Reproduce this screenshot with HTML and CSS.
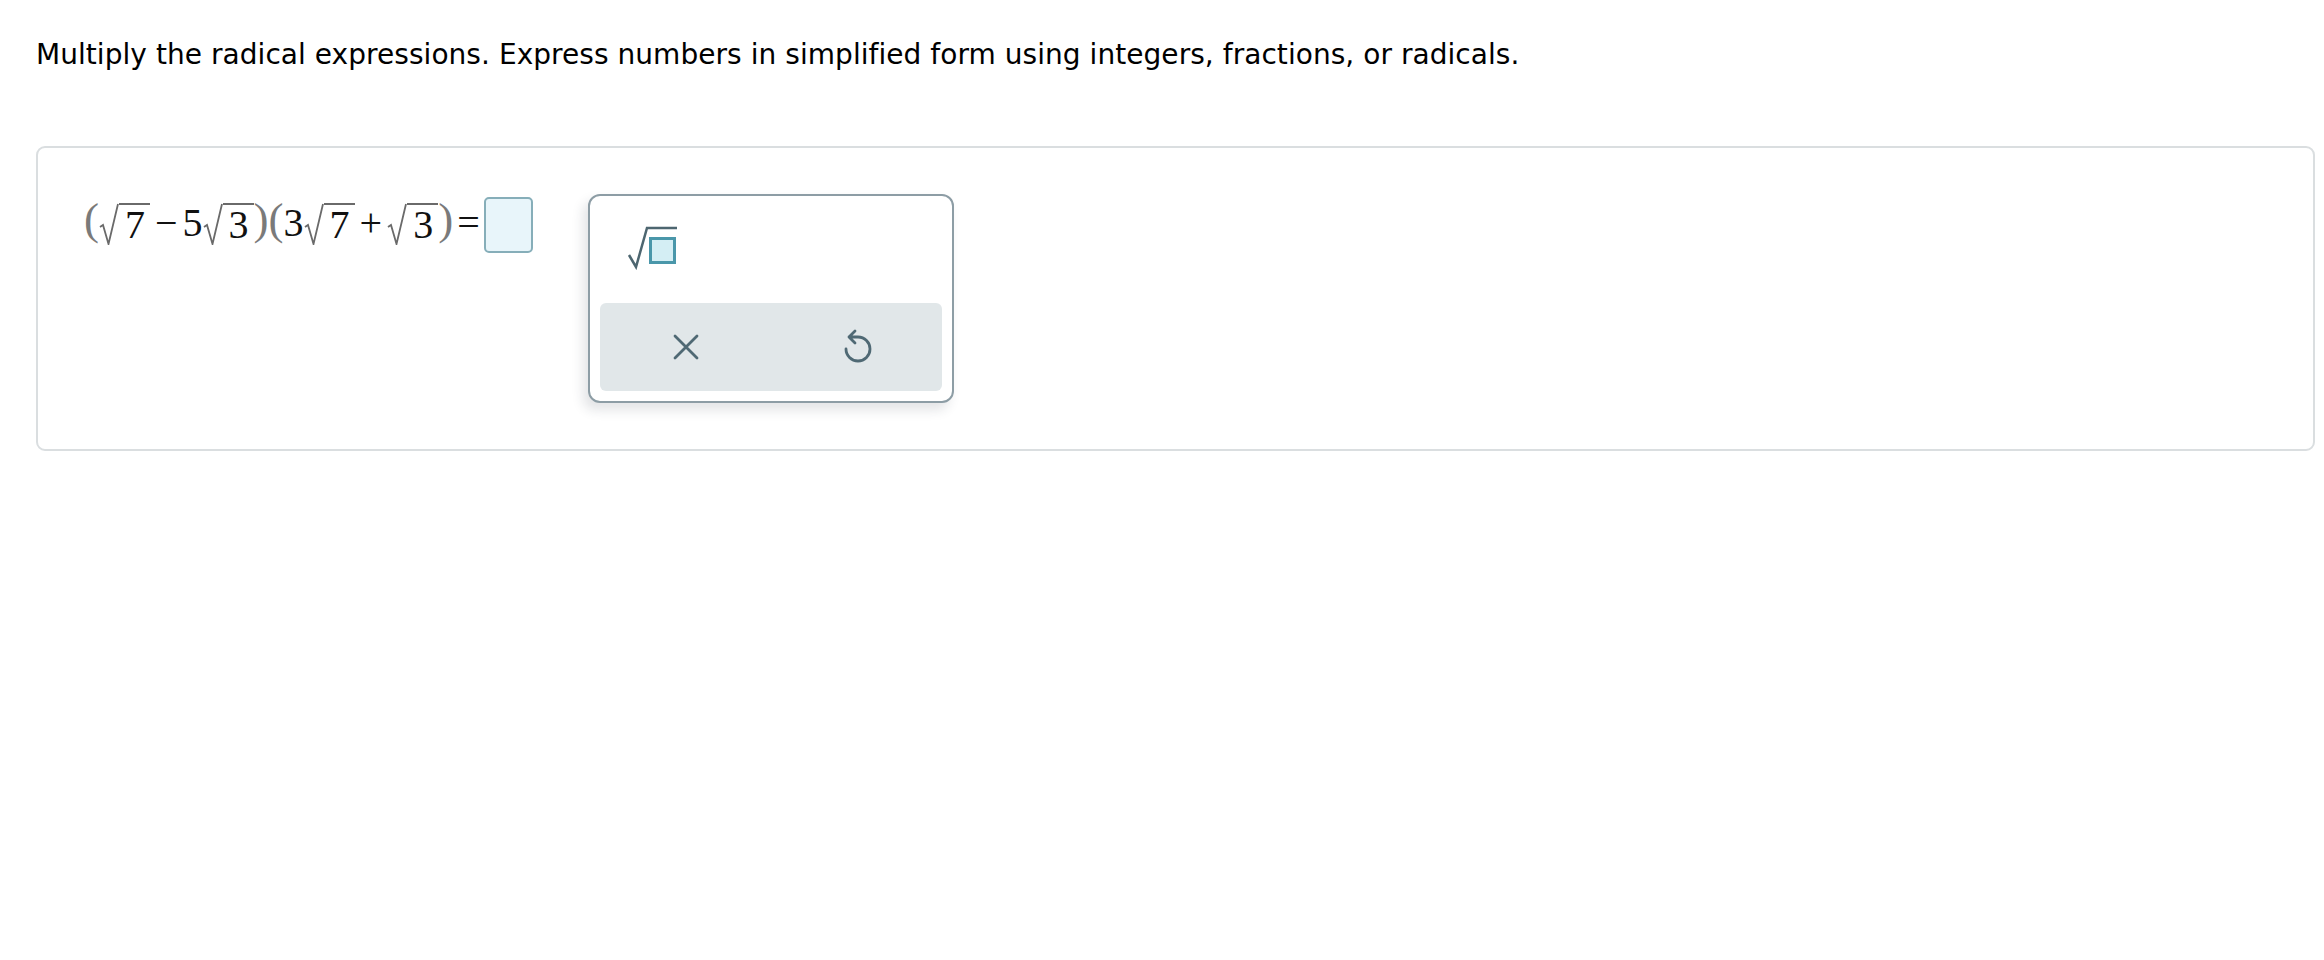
FILE: index.html
```html
<!DOCTYPE html>
<html lang="en">
<head>
<meta charset="utf-8">
<title>Multiply the radical expressions</title>
<link rel="stylesheet" href="styles.css">
</head>
<body>
<main class="page">
  <p class="prompt">Multiply the radical expressions. Express numbers in simplified form using integers, fractions, or radicals.</p>
  <section class="question">
    <div class="math">
      <span class="paren">(</span>
      <span class="rad"><svg class="rad-sign" width="20" height="42" viewBox="0 0 20 42"><path d="M1 24 L4 22 L9.5 41 L19 1"/></svg><span class="radicand">7</span></span>
      <span class="op">&minus;</span>
      <span class="num">5</span>
      <span class="rad"><svg class="rad-sign" width="20" height="42" viewBox="0 0 20 42"><path d="M1 24 L4 22 L9.5 41 L19 1"/></svg><span class="radicand">3</span></span>
      <span class="paren">)</span>
      <span class="paren">(</span>
      <span class="num">3</span>
      <span class="rad"><svg class="rad-sign" width="20" height="42" viewBox="0 0 20 42"><path d="M1 24 L4 22 L9.5 41 L19 1"/></svg><span class="radicand">7</span></span>
      <span class="op">+</span>
      <span class="rad"><svg class="rad-sign" width="20" height="42" viewBox="0 0 20 42"><path d="M1 24 L4 22 L9.5 41 L19 1"/></svg><span class="radicand">3</span></span>
      <span class="paren">)</span>
      <span class="eq">=</span>
      <span class="answer" aria-label="answer box"></span>
    </div>

    <div class="palette">
      <div class="palette-tools">
        <button class="tool" aria-label="square root">
          <svg width="52" height="44" viewBox="0 0 52 44">
            <path class="tool-rad" d="M2 29 L9 41 L20 2 H50"/>
            <rect class="tool-box" x="23.5" y="12.5" width="24" height="24"/>
          </svg>
        </button>
      </div>
      <div class="palette-actions">
        <button class="action" aria-label="clear">
          <svg width="30" height="30" viewBox="0 0 30 30"><path d="M4 4 L26 26 M26 4 L4 26"/></svg>
        </button>
        <button class="action" aria-label="undo">
          <svg width="36" height="38" viewBox="0 0 36 38"><path d="M16 3 L10 9 L16 15 M10 9 H19 A12 12 0 1 1 7 21"/></svg>
        </button>
      </div>
    </div>
  </section>
</main>
</body>
</html>
```

FILE: styles.css
```css
html, body {
  margin: 0;
  padding: 0;
  background: #ffffff;
}

.page {
  padding: 38px 9px 0 36px;
}

.prompt {
  margin: 0 0 74px 0;
  font-family: "DejaVu Sans", Verdana, sans-serif;
  font-size: 28px;
  line-height: 34px;
  letter-spacing: 0.05px;
  color: #000000;
}

.question {
  position: relative;
  box-sizing: border-box;
  height: 305px;
  border: 2px solid #dadee0;
  border-radius: 9px;
  padding: 55px 0 0 46px;
}

.math {
  display: flex;
  align-items: flex-start;
  font-family: "Liberation Serif", "Times New Roman", serif;
  font-size: 40px;
  line-height: 40px;
  color: #111111;
}

.paren {
  font-size: 45px;
  margin-top: -4px;
  color: #7a7a7a;
}

.rad {
  display: inline-flex;
  align-items: flex-start;
}

.rad-sign {
  display: block;
  flex: none;
}

.rad-sign path {
  fill: none;
  stroke: #6a6a6a;
  stroke-width: 1.8;
  stroke-linejoin: miter;
}

.radicand {
  border-top: 2px solid #6a6a6a;
  padding: 0 5px 0 6px;
  margin-top: 0;
}

.op {
  margin: 0 5px;
}

.eq {
  margin-left: 4px;
  margin-right: 2px;
}

.answer {
  box-sizing: border-box;
  width: 49px;
  height: 56px;
  margin-top: -6px;
  margin-left: 2px;
  background: #e8f5fa;
  border: 2px solid #86aeb9;
  border-radius: 5px;
}

.palette {
  position: absolute;
  left: 550px;
  top: 46px;
  box-sizing: border-box;
  width: 366px;
  height: 209px;
  padding: 0 10px 10px 10px;
  background: #ffffff;
  border: 2px solid #8d9da5;
  border-radius: 12px;
  box-shadow: -5px 7px 12px rgba(40, 50, 60, 0.13);
  display: flex;
  flex-direction: column;
}

.palette-tools {
  flex: 1;
  display: flex;
  align-items: flex-start;
  padding: 30px 0 0 27px;
}

.tool {
  border: 0;
  padding: 0;
  margin: 0;
  background: transparent;
  line-height: 0;
}

.tool-rad {
  fill: none;
  stroke: #4d6670;
  stroke-width: 2.5;
}

.tool-box {
  fill: #d4eef4;
  stroke: #4a97aa;
  stroke-width: 3;
}

.palette-actions {
  display: flex;
  height: 88px;
  background: #e1e7e9;
  border-radius: 6px;
}

.action {
  flex: 1;
  display: flex;
  align-items: center;
  justify-content: center;
  border: 0;
  padding: 0;
  margin: 0;
  background: transparent;
}

.action path {
  fill: none;
  stroke: #4f6974;
  stroke-width: 2.8;
  stroke-linecap: round;
  stroke-linejoin: round;
}
```
